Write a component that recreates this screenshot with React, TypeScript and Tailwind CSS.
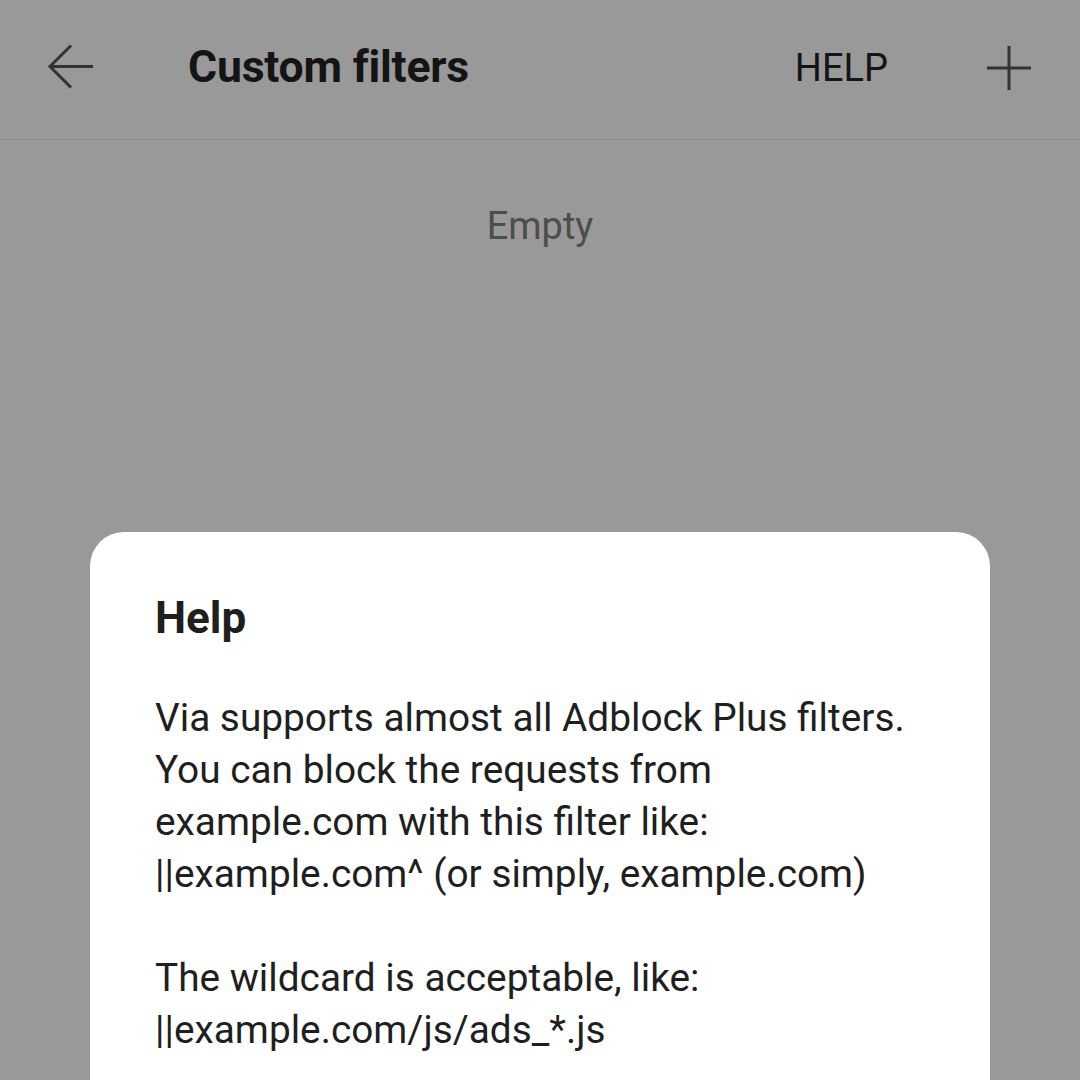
import React from "react";

export default function App() {
  return (
    <div
      className="w-[1080px] h-[1080px] overflow-hidden bg-[#999999] flex flex-col"
      style={{ fontFamily: "Roboto, 'Noto Sans', sans-serif" }}
    >
      <div className="h-[140px] shrink-0 flex items-center border-b border-[#8c8c8c] relative pb-[4px]">
        <div className="w-[140px] h-full flex items-center justify-center">
          <svg width="48" height="48" viewBox="0 0 48 48" className="ml-[2px]">
            <path d="M46 22.5H5M24 1.5L3 22.5L24 43.5" fill="none" stroke="#333333" strokeWidth="3" />
          </svg>
        </div>
        <div className="ml-[48px] text-[44.5px] font-bold text-[#141414] leading-none tracking-[-0.2px]">Custom filters</div>
        <div className="ml-auto text-[38px] text-[#141414] leading-none mr-[98px]">HELP</div>
        <div className="w-[94px] h-full flex items-center justify-start">
          <svg width="46" height="46" viewBox="0 0 46 46">
            <path d="M23 1V45M1 23H45" fill="none" stroke="#333333" strokeWidth="3" />
          </svg>
        </div>
      </div>
      <div className="flex justify-center pt-[67px] text-[38px] text-[#4d4d4d] leading-none">Empty</div>
      <div className="flex-1" />
      <div className="mx-[90px] h-[548px] shrink-0 bg-white rounded-t-[34px] px-[65px] pt-[64px]">
        <div className="text-[44px] font-bold text-[#1f1f1f] leading-none">Help</div>
        <div className="mt-[52px] text-[38.8px] leading-[52px] text-[#1f1f1f]">
          <div>Via supports almost all Adblock Plus filters.</div>
          <div>You can block the requests from</div>
          <div>example.com with this filter like:</div>
          <div>||example.com^ (or simply, example.com)</div>
          <div className="h-[52px]" />
          <div>The wildcard is acceptable, like:</div>
          <div>||example.com/js/ads_*.js</div>
        </div>
      </div>
    </div>
  );
}
